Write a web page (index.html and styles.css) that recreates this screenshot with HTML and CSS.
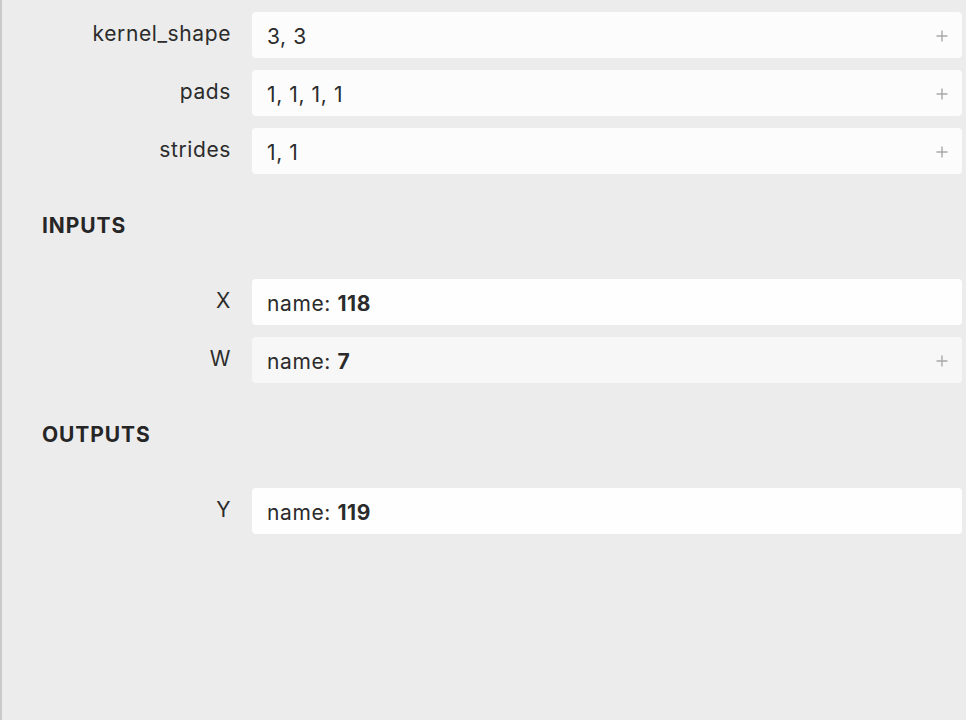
FILE: index.html
```html
<!DOCTYPE html>
<html lang="en">
<head>
  <meta charset="UTF-8" />
  <title>Node Properties</title>
  <link rel="stylesheet" href="styles.css">
</head>
<body>
  <div class="sidebar">
    <div class="rows">
      <div class="row">
        <div class="row-label">kernel_shape</div>
        <div class="row-value">
          <span>3, 3</span>
          <svg class="expand" width="12" height="12" viewBox="0 0 12 12"><path d="M6 0.5V11.5M0.5 6H11.5" /></svg>
        </div>
      </div>
      <div class="row">
        <div class="row-label">pads</div>
        <div class="row-value">
          <span>1, 1, 1, 1</span>
          <svg class="expand" width="12" height="12" viewBox="0 0 12 12"><path d="M6 0.5V11.5M0.5 6H11.5" /></svg>
        </div>
      </div>
      <div class="row">
        <div class="row-label">strides</div>
        <div class="row-value">
          <span>1, 1</span>
          <svg class="expand" width="12" height="12" viewBox="0 0 12 12"><path d="M6 0.5V11.5M0.5 6H11.5" /></svg>
        </div>
      </div>
    </div>

    <h3 class="section-title">INPUTS</h3>
    <div class="rows">
      <div class="row">
        <div class="row-label">X</div>
        <div class="row-value plain">
          <span>name: <b>118</b></span>
        </div>
      </div>
      <div class="row">
        <div class="row-label">W</div>
        <div class="row-value muted">
          <span>name: <b>7</b></span>
          <svg class="expand" width="12" height="12" viewBox="0 0 12 12"><path d="M6 0.5V11.5M0.5 6H11.5" /></svg>
        </div>
      </div>
    </div>

    <h3 class="section-title">OUTPUTS</h3>
    <div class="rows">
      <div class="row">
        <div class="row-label">Y</div>
        <div class="row-value plain">
          <span>name: <b>119</b></span>
        </div>
      </div>
    </div>
  </div>
</body>
</html>
```

FILE: styles.css
```css
html, body {
  margin: 0;
  height: 100%;
}

body {
  font-family: Inter, 'Noto Sans', sans-serif;
  background: #ececec;
  color: #2b2b2b;
}

.sidebar {
  box-sizing: border-box;
  height: 100%;
  border-left: 2px solid #cacaca;
  padding: 12px 4px 0 0;
}

.rows {
  display: flex;
  flex-direction: column;
  gap: 12px;
}

.row {
  display: grid;
  grid-template-columns: 229px 1fr;
  column-gap: 21px;
  align-items: center;
}

.row-label {
  text-align: right;
  font-size: 21px;
  line-height: 24px;
  letter-spacing: 0.6px;
  margin-top: -2px;
}

.row-value {
  display: flex;
  align-items: center;
  justify-content: space-between;
  height: 46px;
  box-sizing: border-box;
  padding: 2px 14px 0 15px;
  background: #fcfcfc;
  border-radius: 4px;
  font-size: 21px;
  letter-spacing: 0.6px;
}

.row-value.plain {
  background: #fefefe;
}

.row-value.muted {
  background: #f7f7f7;
}

.row-value b {
  font-weight: 700;
}

.expand path {
  stroke: #a8a8a8;
  stroke-width: 1.4;
  fill: none;
}

.section-title {
  margin: 40px 0 41px 40px;
  font-size: 21px;
  line-height: 24px;
  font-weight: 700;
  letter-spacing: 0.9px;
  color: #262626;
}
```
